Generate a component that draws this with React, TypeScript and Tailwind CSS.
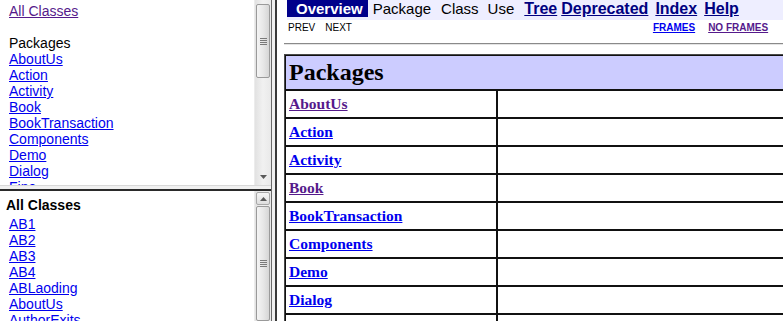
import React from "react";

const packages = ["AboutUs", "Action", "Activity", "Book", "BookTransaction", "Components", "Demo", "Dialog", "Fine"];
const classes = ["AB1", "AB2", "AB3", "AB4", "ABLaoding", "AboutUs", "AuthorExits"];
const visited = ["AboutUs", "Book"];

function Grip() {
  return (
    <div className="flex flex-col gap-[1px] items-center">
      <div className="w-[7px] h-[1px] bg-[#7a7a7a]" />
      <div className="w-[7px] h-[1px] bg-[#7a7a7a]" />
      <div className="w-[7px] h-[1px] bg-[#7a7a7a]" />
      <div className="w-[7px] h-[1px] bg-[#7a7a7a]" />
    </div>
  );
}

function Thumb({ className }: { className: string }) {
  return (
    <div
      className={
        "mx-[1px] rounded-[2px] border border-[#9a9a9a] bg-gradient-to-r from-[#f4f4f4] via-[#e8e8e8] to-[#d6d6d6] flex items-center justify-center " +
        className
      }
    >
      <Grip />
    </div>
  );
}

function Arrow({ up }: { up?: boolean }) {
  return (
    <svg width="7" height="4" viewBox="0 0 7 4">
      {up ? <path d="M0 4 L3.5 0 L7 4 Z" fill="#5a5a5a" /> : <path d="M0 0 L3.5 4 L7 0 Z" fill="#5a5a5a" />}
    </svg>
  );
}

export default function App() {
  return (
    <div className="w-[783px] h-[321px] flex overflow-hidden bg-white font-['Liberation_Sans',Arial,sans-serif] text-black">
      {/* left frames */}
      <div className="w-[271px] shrink-0 flex flex-col">
        <div className="h-[185px] flex overflow-hidden">
          <div className="flex-1 overflow-hidden pl-[9px] pt-[3px] text-[14px] leading-[16px] whitespace-nowrap">
            <a className="block text-[#551a8b] underline">All Classes</a>
            <div className="mt-[16px]">Packages</div>
            {packages.map((p) => (
              <a key={p} className="block text-[#0000ee] underline">
                {p}
              </a>
            ))}
          </div>
          <div className="w-[17px] flex flex-col bg-gradient-to-r from-[#e2e2e2] via-[#f1f1f1] to-[#e9e9e9] border-l border-[#ececec]">
            <Thumb className="mt-[4px] h-[74px]" />
            <div className="flex-1" />
            <div className="h-[17px] flex items-center justify-center">
              <Arrow />
            </div>
          </div>
        </div>
        <div className="h-[4px] bg-[#f0f0f0] border-t border-[#d8d8d8]" />
        <div className="flex-1 flex overflow-hidden border-t-2 border-[#2a2a2a]">
          <div className="flex-1 overflow-hidden pl-[6px] pt-[6px] text-[14px] leading-[16px] whitespace-nowrap">
            <div className="font-bold">All Classes</div>
            <div className="pl-[3px] mt-[3px]">
              {classes.map((c) => (
                <a key={c} className="block text-[#0000ee] underline">
                  {c}
                </a>
              ))}
            </div>
          </div>
          <div className="w-[17px] flex flex-col bg-gradient-to-r from-[#e2e2e2] via-[#f1f1f1] to-[#e9e9e9] border-l border-[#ececec]">
            <div className="mt-[1px] mx-[1px] h-[16px] rounded-[2px] border border-[#a8a8a8] bg-gradient-to-b from-[#f6f6f6] to-[#dedede] flex items-center justify-center">
              <Arrow up />
            </div>
            <Thumb className="mt-[1px] h-[140px]" />
          </div>
        </div>
      </div>

      {/* frame divider */}
      <div className="w-[6px] shrink-0 bg-[#f0f0f0] border-l border-[#6a6a6a] border-r-2 border-r-[#3a3a3a]" />

      {/* right frame */}
      <div className="flex-1 overflow-hidden pl-[7px]">
        <div className="ml-[3px] h-[20px] bg-[#eeeeff] flex items-start text-[15px] leading-[17px] whitespace-nowrap">
          <span className="bg-[#00008b] text-white font-bold pl-[9px] pr-[5px] h-[17px]">Overview</span>
          <span className="ml-[5px]">Package</span>
          <span className="ml-[10px]">Class</span>
          <span className="ml-[9px]">Use</span>
          <a className="ml-[10px] text-[16px] font-bold underline text-[#000080]">Tree</a>
          <a className="ml-[4px] text-[16px] font-bold underline text-[#000080]">Deprecated</a>
          <a className="ml-[7px] text-[16px] font-bold underline text-[#000080]">Index</a>
          <a className="ml-[7px] text-[16px] font-bold underline text-[#000080]">Help</a>
        </div>
        <div className="h-[22px] pt-[2px] flex text-[10px] leading-[12px] whitespace-nowrap">
          <span className="ml-[4px]">PREV</span>
          <span className="ml-[10px]">NEXT</span>
          <a className="ml-[301px] font-bold underline text-[#0000ee]">FRAMES</a>
          <a className="ml-[13px] font-bold underline text-[#551a8b]">NO FRAMES</a>
        </div>
        <div className="mt-[1px] border-t border-[#8a8a8a] border-b border-b-[#e4e4e4]" />

        <table className="mt-[9px] w-[560px] table-fixed border-separate border-spacing-0 border border-[#4a4a4a] leading-[20px] font-['Liberation_Serif','Times_New_Roman',serif]">
          <colgroup>
            <col className="w-[212px]" />
            <col />
          </colgroup>
          <tbody>
            <tr>
              <th colSpan={2} className="bg-[#ccccff] border border-[#111] p-[3px] text-left text-[24px] leading-[27px] font-bold">
                Packages
              </th>
            </tr>
            {packages.map((p) => (
              <tr key={p}>
                <td className="border border-[#111] p-[3px] text-[15.5px] leading-[20px] font-bold whitespace-nowrap">
                  <a className={"underline " + (visited.includes(p) ? "text-[#551a8b]" : "text-[#0000ee]")}>{p}</a>
                </td>
                <td className="border border-[#111] p-[3px] text-[15.5px] leading-[20px]">&nbsp;</td>
              </tr>
            ))}
          </tbody>
        </table>
      </div>
    </div>
  );
}
